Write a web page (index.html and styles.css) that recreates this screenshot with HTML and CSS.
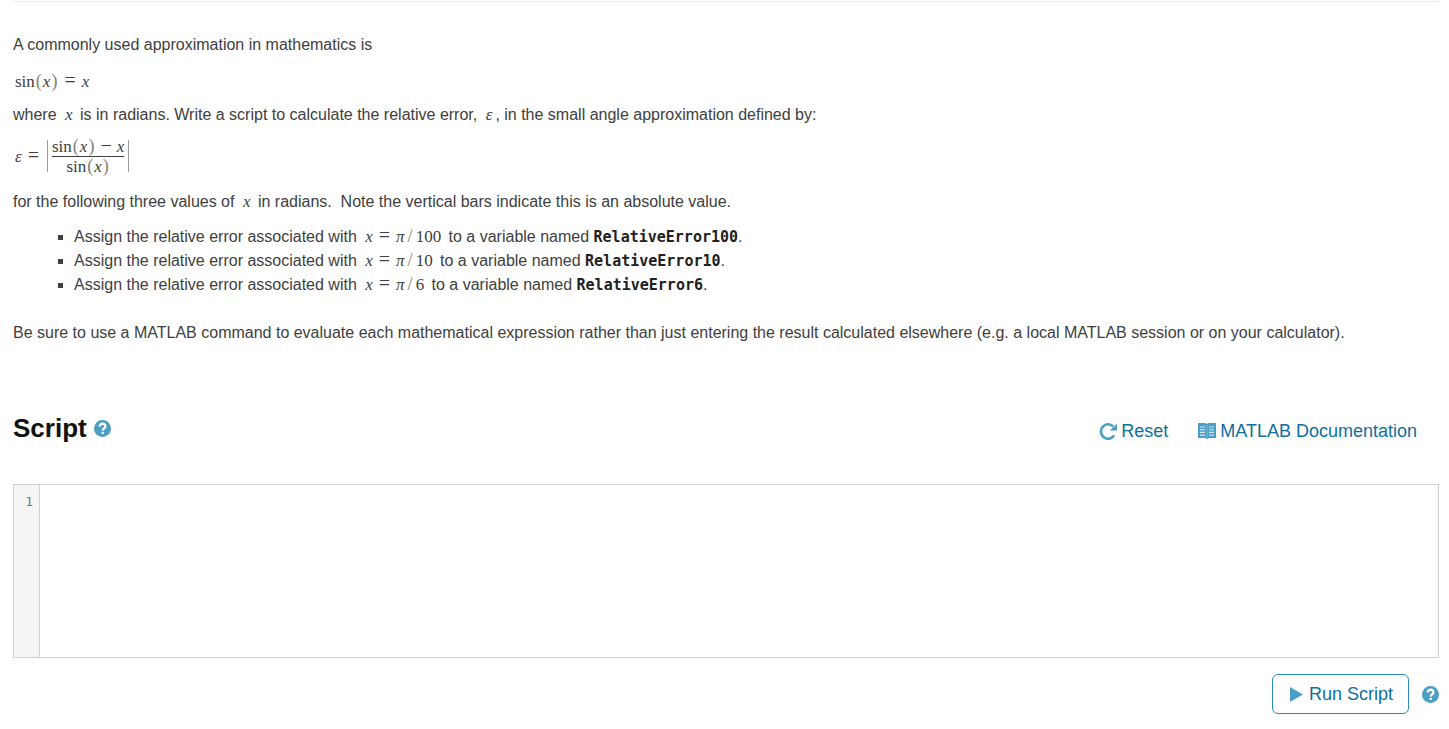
FILE: index.html
```html
<!DOCTYPE html>
<html lang="en">
<head>
  <meta charset="UTF-8">
  <meta name="viewport" content="width=device-width, initial-scale=1.0">
  <title>Relative Error - Small Angle Approximation</title>
  <link rel="stylesheet" href="styles.css">
</head>
<body>
  <main class="problem">
    <section class="description">
      <p>A commonly used approximation in mathematics is</p>
      <p class="formula"><span class="math">sin<span class="paren">(</span><i>x</i><span class="paren">)</span><span class="op">=</span><i>x</i></span></p>
      <p>where <span class="math inline"><i>x</i></span> is in radians. Write a script to calculate the relative error, <span class="math inline"><i>ε</i></span>, in the small angle approximation defined by:</p>
      <div class="formula equation math">
        <span><i>ε</i><span class="op">=</span></span>
        <span class="abs">
          <span class="fraction">
            <span class="numerator">sin<span class="paren">(</span><i>x</i><span class="paren">)</span><span class="op">−</span><i>x</i></span>
            <span class="denominator">sin<span class="paren">(</span><i>x</i><span class="paren">)</span></span>
          </span>
        </span>
      </div>
      <p>for the following three values of <span class="math inline"><i>x</i></span> in radians.&nbsp; Note the vertical bars indicate this is an absolute value.</p>
      <ul>
        <li>Assign the relative error associated with <span class="math inline"><i>x</i><span class="op">=</span><i>π</i><span class="slash">/</span>100</span> to a variable named <code>RelativeError100</code>.</li>
        <li>Assign the relative error associated with <span class="math inline"><i>x</i><span class="op">=</span><i>π</i><span class="slash">/</span>10</span> to a variable named <code>RelativeError10</code>.</li>
        <li>Assign the relative error associated with <span class="math inline"><i>x</i><span class="op">=</span><i>π</i><span class="slash">/</span>6</span> to a variable named <code>RelativeError6</code>.</li>
      </ul>
      <p>Be sure to use a MATLAB command to evaluate each mathematical expression rather than just entering the result calculated elsewhere (e.g. a local MATLAB session or on your calculator).</p>
    </section>

    <header class="script-header">
      <div class="script-title">
        <h2><label for="code">Script</label></h2>
        <button class="help" type="button" aria-label="Script help">
          <svg viewBox="0 0 18 18" width="17" height="17"><circle cx="9" cy="9" r="9" fill="#4b9fc5"/><path d="M6 7C6 2.8 12.4 3.2 12.1 6.8C12 8.8 9.2 8.7 9.2 11" fill="none" stroke="#fff" stroke-width="2.4"/><path d="M8 12.5h2.4v2.3H8z" fill="#fff"/></svg>
        </button>
      </div>
      <nav class="tools">
        <button class="reset" type="button">
          <svg viewBox="0 0 18 18" width="18" height="18"><path d="M14.4 4.6A7.2 7.2 0 1 0 15.2 13.4" fill="none" stroke="#4b9fc5" stroke-width="2.6"/><path d="M18 1.5v7h-7.4l2.8-2.6 2-1.4z" fill="#4b9fc5"/></svg>
          Reset
        </button>
        <a href="#">
          <svg viewBox="0 0 18 17" width="18" height="17"><path d="M0 0h7.6L9 1l1.4-1H18v15h-7.6L9 16.6 7.6 15H0z" fill="#4b9fc5"/><path d="M2 4h5M2 6.7h5M2 9.4h5M2 12.1h5M11 4h5M11 6.7h5M11 9.4h5M11 12.1h5" stroke="#d3e8f2" stroke-width="1.1"/><path d="M9 2v13" stroke="#86bed8" stroke-width=".8"/></svg>
          MATLAB Documentation
        </a>
      </nav>
    </header>

    <div class="editor">
      <div class="gutter">1</div>
      <textarea id="code" spellcheck="false"></textarea>
    </div>

    <footer class="actions">
      <button class="run" type="button">
        <svg viewBox="0 0 13 15" width="13" height="15"><path d="M0 0l13 7.5L0 15z" fill="#4b9fc5"/></svg>
        Run Script
      </button>
      <button class="help" type="button" aria-label="Run help">
        <svg viewBox="0 0 18 18" width="17" height="17"><circle cx="9" cy="9" r="9" fill="#4b9fc5"/><path d="M6 7C6 2.8 12.4 3.2 12.1 6.8C12 8.8 9.2 8.7 9.2 11" fill="none" stroke="#fff" stroke-width="2.4"/><path d="M8 12.5h2.4v2.3H8z" fill="#fff"/></svg>
      </button>
    </footer>
  </main>
</body>
</html>
```
FILE: styles.css
```css
* {
  box-sizing: border-box;
}

body {
  margin: 0;
  background: #fff;
  color: #404040;
  font-family: "Liberation Sans", Arial, sans-serif;
  font-size: 16px;
  line-height: 24px;
}

.problem {
  margin: 1px 10px 0 13px;
  border-top: 1px solid #e6e6e6;
}

.description {
  padding-top: 31px;
}

p {
  margin: 0 0 11px;
}

.math {
  font-family: "Liberation Serif", "Times New Roman", serif;
  font-size: 17px;
  line-height: 19px;
}

.math i {
  line-height: 1;
}

.inline {
  margin: 0 3px 0 4px;
}

.op {
  padding: 0 6px;
  font-size: 20px;
  line-height: 1px;
}

.paren,
.slash {
  padding: 0 1px;
  color: #808080;
  font-size: 18px;
  line-height: 1;
}

.slash {
  padding: 0 3px;
}

.formula {
  margin-bottom: 9px;
  padding: 2px 0 0 2px;
}

.equation {
  display: flex;
  align-items: center;
  gap: 2px;
  margin-bottom: 18px;
}

.abs {
  display: flex;
  align-items: center;
  height: 32px;
  padding: 0 4px;
  border: solid #999;
  border-width: 0 1px;
}

.fraction {
  display: flex;
  flex-direction: column;
  text-align: center;
}

.numerator {
  border-bottom: 1px solid #404040;
}

.numerator .op {
  padding: 0 5px;
}

ul {
  margin: 0 0 24px;
  padding-left: 61px;
  list-style: square;
}

code {
  color: #212121;
  font-family: "DejaVu Sans Mono", Consolas, monospace;
  font-size: 15px;
  font-weight: bold;
  line-height: 1;
}

button {
  padding: 0;
  border: 0;
  background: none;
  color: #0f6f9f;
  font: inherit;
  cursor: pointer;
}

svg {
  display: block;
  flex: none;
}

.script-header {
  display: flex;
  align-items: center;
  justify-content: space-between;
  margin: 65px 22px 38px 0;
}

.script-title {
  display: flex;
  align-items: center;
  gap: 7px;
}

h2 {
  margin: 0;
  color: #111;
  font-size: 26px;
  line-height: 36px;
}

.tools {
  display: flex;
  gap: 30px;
  padding-top: 6px;
  font-size: 18px;
}

.tools a,
.tools button {
  display: flex;
  align-items: center;
  gap: 4px;
  color: #0f6f9f;
  text-decoration: none;
}

.editor {
  display: flex;
  height: 174px;
  border: 1px solid #d0d0d0;
}

.gutter {
  width: 26px;
  padding: 5px 6px;
  border-right: 1px solid #d0d0d0;
  background: #f5f5f5;
  color: #777;
  font-family: "DejaVu Sans Mono", Consolas, monospace;
  font-size: 13px;
  text-align: right;
}

textarea {
  flex: 1;
  padding: 5px 4px;
  border: 0;
  outline: 0;
  resize: none;
  font-family: "DejaVu Sans Mono", Consolas, monospace;
  font-size: 13px;
  line-height: 24px;
}

.actions {
  display: flex;
  align-items: center;
  justify-content: flex-end;
  gap: 13px;
  margin-top: 16px;
}

.run {
  display: flex;
  align-items: center;
  gap: 6px;
  padding: 7px 15px 7px 17px;
  border: 1px solid #2b8bb8;
  border-radius: 6px;
  font-size: 18px;
}
```
